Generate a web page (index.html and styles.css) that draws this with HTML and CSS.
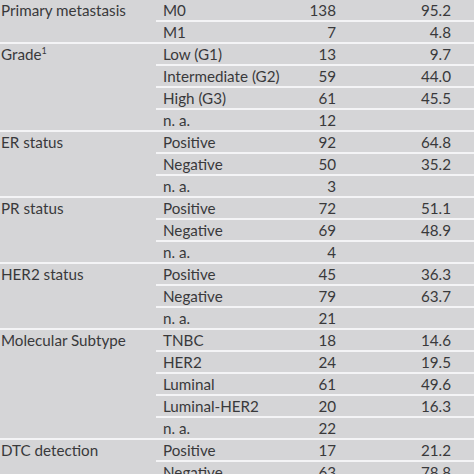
FILE: index.html
```html
<!DOCTYPE html>
<html>
<head>
<meta charset="utf-8">
<link rel="stylesheet" href="styles.css">
</head>
<body>
<table class="data">
<colgroup>
<col class="c-label"><col class="c-cat"><col class="c-n"><col class="c-pct"><col class="c-rest">
</colgroup>
<tbody>
<tr class="group"><td class="label" rowspan="2">Primary metastasis</td><td class="cat">M0</td><td class="num">138</td><td class="num pct">95.2</td><td class="rest"></td></tr>
<tr><td class="cat">M1</td><td class="num">7</td><td class="num pct">4.8</td><td class="rest"></td></tr>

<tr class="group"><td class="label" rowspan="4">Grade<sup>1</sup></td><td class="cat">Low (G1)</td><td class="num">13</td><td class="num pct">9.7</td><td class="rest"></td></tr>
<tr><td class="cat">Intermediate (G2)</td><td class="num">59</td><td class="num pct">44.0</td><td class="rest"></td></tr>
<tr><td class="cat">High (G3)</td><td class="num">61</td><td class="num pct">45.5</td><td class="rest"></td></tr>
<tr><td class="cat">n. a.</td><td class="num">12</td><td class="num pct"></td><td class="rest"></td></tr>

<tr class="group"><td class="label" rowspan="3">ER status</td><td class="cat">Positive</td><td class="num">92</td><td class="num pct">64.8</td><td class="rest"></td></tr>
<tr><td class="cat">Negative</td><td class="num">50</td><td class="num pct">35.2</td><td class="rest"></td></tr>
<tr><td class="cat">n. a.</td><td class="num">3</td><td class="num pct"></td><td class="rest"></td></tr>

<tr class="group"><td class="label" rowspan="3">PR status</td><td class="cat">Positive</td><td class="num">72</td><td class="num pct">51.1</td><td class="rest"></td></tr>
<tr><td class="cat">Negative</td><td class="num">69</td><td class="num pct">48.9</td><td class="rest"></td></tr>
<tr><td class="cat">n. a.</td><td class="num">4</td><td class="num pct"></td><td class="rest"></td></tr>

<tr class="group"><td class="label" rowspan="3">HER2 status</td><td class="cat">Positive</td><td class="num">45</td><td class="num pct">36.3</td><td class="rest"></td></tr>
<tr><td class="cat">Negative</td><td class="num">79</td><td class="num pct">63.7</td><td class="rest"></td></tr>
<tr><td class="cat">n. a.</td><td class="num">21</td><td class="num pct"></td><td class="rest"></td></tr>

<tr class="group"><td class="label" rowspan="5">Molecular Subtype</td><td class="cat">TNBC</td><td class="num">18</td><td class="num pct">14.6</td><td class="rest"></td></tr>
<tr><td class="cat">HER2</td><td class="num">24</td><td class="num pct">19.5</td><td class="rest"></td></tr>
<tr><td class="cat">Luminal</td><td class="num">61</td><td class="num pct">49.6</td><td class="rest"></td></tr>
<tr><td class="cat">Luminal-HER2</td><td class="num">20</td><td class="num pct">16.3</td><td class="rest"></td></tr>
<tr><td class="cat">n. a.</td><td class="num">22</td><td class="num pct"></td><td class="rest"></td></tr>

<tr class="group"><td class="label" rowspan="2">DTC detection</td><td class="cat">Positive</td><td class="num">17</td><td class="num pct">21.2</td><td class="rest"></td></tr>
<tr><td class="cat">Negative</td><td class="num">63</td><td class="num pct">78.8</td><td class="rest"></td></tr>
</tbody>
</table>
</body>
</html>
```
FILE: styles.css
```css
html, body {
  margin: 0;
  padding: 0;
  background: #d5d5d7;
  overflow: hidden;
  width: 474px;
  height: 474px;
}
.data {
  border-collapse: separate;
  border-spacing: 0;
  table-layout: fixed;
  width: 520px;
  margin-top: -2px;
  font-family: Lato, "Liberation Sans", sans-serif;
  font-size: 15.2px;
  color: #39393b;
  background: #d5d5d7;
}
.c-label { width: 156px; }
.c-cat { width: 134px; }
.c-n { width: 53px; }
.c-pct { width: 115px; }
.c-rest { width: 62px; }
.data td {
  height: 20px;
  padding: 0;
  line-height: 20px;
  border-top: 2px solid #f4f4f6;
  vertical-align: top;
  white-space: nowrap;
}
.data td.label {
  padding-left: 1px;
}
.data td.cat {
  padding-left: 7px;
}
.data td.num {
  text-align: right;
  padding-right: 7px;
}
.data sup {
  font-size: 9px;
  line-height: 0;
  vertical-align: 6px;
}
```
